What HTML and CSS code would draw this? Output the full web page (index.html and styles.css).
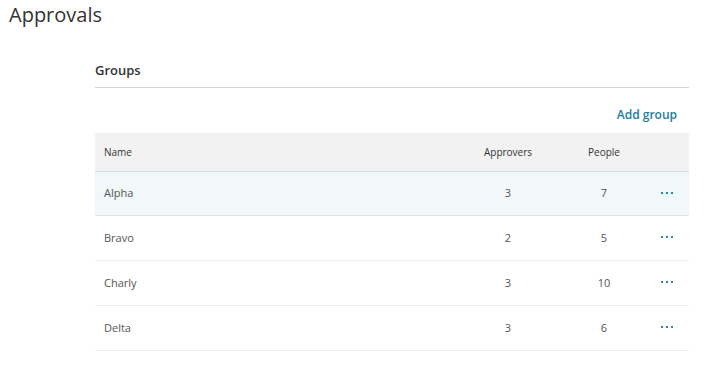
FILE: index.html
```html
<!DOCTYPE html>
<html lang="en">
  <head>
    <meta charset="UTF-8" />
    <meta name="viewport" content="width=device-width, initial-scale=1.0" />
    <title>Approvals</title>
    <link rel="stylesheet" href="styles.css">
  </head>
  <body>
    <h1 class="page-title">Approvals</h1>
    <section class="groups">
      <h2 class="section-title">Groups</h2>
      <div class="toolbar">
        <a href="#" class="add-link">Add group</a>
      </div>
      <div class="table">
        <div class="row head">
          <div class="cell name">Name</div>
          <div class="cell num">Approvers</div>
          <div class="cell num">People</div>
          <div class="cell act"></div>
        </div>
        <div class="row active">
          <div class="cell name">Alpha</div>
          <div class="cell num">3</div>
          <div class="cell num">7</div>
          <div class="cell act"><svg class="dots" width="12" height="2" viewBox="0 0 12 2"><rect x="0" y="0" width="2" height="2"/><rect x="5" y="0" width="2" height="2"/><rect x="10" y="0" width="2" height="2"/></svg></div>
        </div>
        <div class="row">
          <div class="cell name">Bravo</div>
          <div class="cell num">2</div>
          <div class="cell num">5</div>
          <div class="cell act"><svg class="dots" width="12" height="2" viewBox="0 0 12 2"><rect x="0" y="0" width="2" height="2"/><rect x="5" y="0" width="2" height="2"/><rect x="10" y="0" width="2" height="2"/></svg></div>
        </div>
        <div class="row">
          <div class="cell name">Charly</div>
          <div class="cell num">3</div>
          <div class="cell num">10</div>
          <div class="cell act"><svg class="dots" width="12" height="2" viewBox="0 0 12 2"><rect x="0" y="0" width="2" height="2"/><rect x="5" y="0" width="2" height="2"/><rect x="10" y="0" width="2" height="2"/></svg></div>
        </div>
        <div class="row">
          <div class="cell name">Delta</div>
          <div class="cell num">3</div>
          <div class="cell num">6</div>
          <div class="cell act"><svg class="dots" width="12" height="2" viewBox="0 0 12 2"><rect x="0" y="0" width="2" height="2"/><rect x="5" y="0" width="2" height="2"/><rect x="10" y="0" width="2" height="2"/></svg></div>
        </div>
      </div>
    </section>
  </body>
</html>
```

FILE: styles.css
```css
body {
  font-family: "Open Sans", sans-serif;
  margin: 0;
  padding: 0;
  background-color: #fff;
  color: #333;
}

.page-title {
  font-size: 20px;
  font-weight: 400;
  line-height: 28px;
  margin: 0;
  padding: 1px 0 0 9px;
  color: #333;
}

.groups {
  margin: 0 22px 0 95px;
  padding-top: 32px;
}

.section-title {
  font-size: 13px;
  font-weight: 600;
  line-height: 18px;
  margin: 0;
  padding-bottom: 8px;
  border-bottom: 1px solid #d4d4d4;
}

.toolbar {
  display: flex;
  justify-content: flex-end;
  padding: 18px 12px 10px 0;
}

.add-link {
  font-size: 12px;
  font-weight: 600;
  line-height: 17px;
  color: #1b7e9c;
  text-decoration: none;
}

.table {
  font-size: 11px;
  color: #555;
}

.row {
  display: grid;
  grid-template-columns: 1fr 82px 110px 30px;
  align-items: center;
  height: 45px;
  padding-bottom: 2px;
  box-sizing: border-box;
  border-bottom: 1px solid #ececec;
}

.row.head {
  height: 39px;
  padding-bottom: 0;
  background-color: #f2f2f2;
  border-bottom: 1px solid #d5dde0;
  color: #333;
  font-size: 10px;
}

.row.active {
  height: 44px;
  background-color: #f0f8fa;
  border-bottom-color: #dde3e6;
}

.cell.name {
  padding-left: 9px;
}

.cell.num {
  text-align: center;
}

.cell.act {
  display: flex;
  justify-content: flex-end;
  padding-right: 16px;
}

.dots {
  fill: #2a86a3;
}
```
